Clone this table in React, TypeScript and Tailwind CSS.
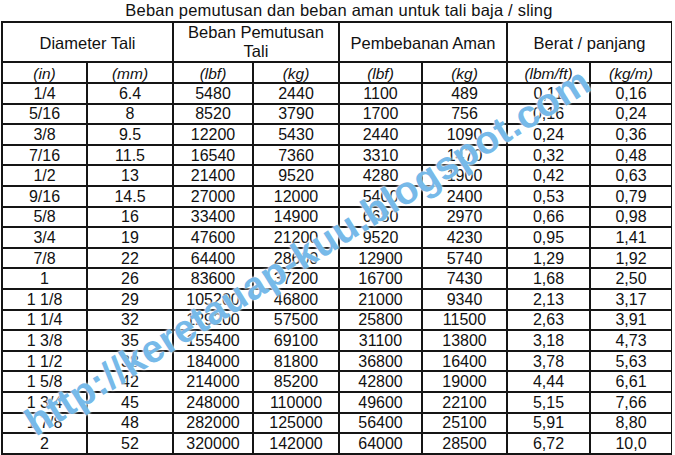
const HEAD2 = ['(in)', '(mm)', '(lbf)', '(kg)', '(lbf)', '(kg)', '(lbm/ft)', '(kg/m)'];

const ROWS: string[][] = [
  ['1/4', '6.4', '5480', '2440', '1100', '489', '0,11', '0,16'],
  ['5/16', '8', '8520', '3790', '1700', '756', '0,16', '0,24'],
  ['3/8', '9.5', '12200', '5430', '2440', '1090', '0,24', '0,36'],
  ['7/16', '11.5', '16540', '7360', '3310', '1470', '0,32', '0,48'],
  ['1/2', '13', '21400', '9520', '4280', '1900', '0,42', '0,63'],
  ['9/16', '14.5', '27000', '12000', '5400', '2400', '0,53', '0,79'],
  ['5/8', '16', '33400', '14900', '6680', '2970', '0,66', '0,98'],
  ['3/4', '19', '47600', '21200', '9520', '4230', '0,95', '1,41'],
  ['7/8', '22', '64400', '28600', '12900', '5740', '1,29', '1,92'],
  ['1', '26', '83600', '37200', '16700', '7430', '1,68', '2,50'],
  ['1 1/8', '29', '105200', '46800', '21000', '9340', '2,13', '3,17'],
  ['1 1/4', '32', '129200', '57500', '25800', '11500', '2,63', '3,91'],
  ['1 3/8', '35', '155400', '69100', '31100', '13800', '3,18', '4,73'],
  ['1 1/2', '38', '184000', '81800', '36800', '16400', '3,78', '5,63'],
  ['1 5/8', '42', '214000', '85200', '42800', '19000', '4,44', '6,61'],
  ['1 3/4', '45', '248000', '110000', '49600', '22100', '5,15', '7,66'],
  ['1 7/8', '48', '282000', '125000', '56400', '25100', '5,91', '8,80'],
  ['2', '52', '320000', '142000', '64000', '28500', '6,72', '10,0'],
];

export default function App() {
  return (
    <div className="relative w-[675px] h-[455px] overflow-hidden bg-white text-[#111] font-['Liberation_Sans',Arial,sans-serif]">
      {/* Title */}
      <div className="h-[21px] pl-[3px] text-center text-[16.5px] leading-[21px] tracking-[0.2px]">
        Beban pemutusan dan beban aman untuk tali baja / sling
      </div>

      {/* Table: black background + 2px gaps make the grid lines */}
      <div className="ml-[1px] w-[671px] p-[2px] bg-[#151515] grid grid-cols-[83px_84px_78px_84px_81px_83px_81px_80px] grid-rows-[38px_19px_repeat(18,18.6px)] gap-[2px]">
        <div className="col-span-2 bg-white flex items-center justify-center text-[16.5px] pt-[2px]">Diameter Tali</div>
        <div className="col-span-2 bg-white flex items-center justify-center text-center text-[16.5px] leading-[19px]">
          Beban Pemutusan
          <br />
          Tali
        </div>
        <div className="col-span-2 bg-white flex items-center justify-center text-[16.5px] pt-[2px]">Pembebanan Aman</div>
        <div className="col-span-2 bg-white flex items-center justify-center text-[16.5px] pt-[2px]">Berat / panjang</div>

        {HEAD2.map((h, i) => (
          <div key={i} className="bg-white flex items-end justify-center italic text-[15.5px] leading-[17px]">
            {h}
          </div>
        ))}

        {ROWS.map((row, r) =>
          row.map((cell, c) => (
            <div key={`${r}-${c}`} className="bg-white flex items-center justify-center text-[16px] leading-[18px] pt-[1px]">
              {cell}
            </div>
          ))
        )}
      </div>

      {/* Watermark */}
      <div className="pointer-events-none absolute left-[308px] top-[252px] -translate-x-1/2 -translate-y-1/2 -rotate-[32deg] whitespace-nowrap font-bold text-[39px] tracking-[0.5px] text-[#3a9be0]/70 [text-shadow:0_0_2px_#fff,0_0_3px_#fff]">
        http://keretauap-kuu.blogspot.com
      </div>
    </div>
  );
}
